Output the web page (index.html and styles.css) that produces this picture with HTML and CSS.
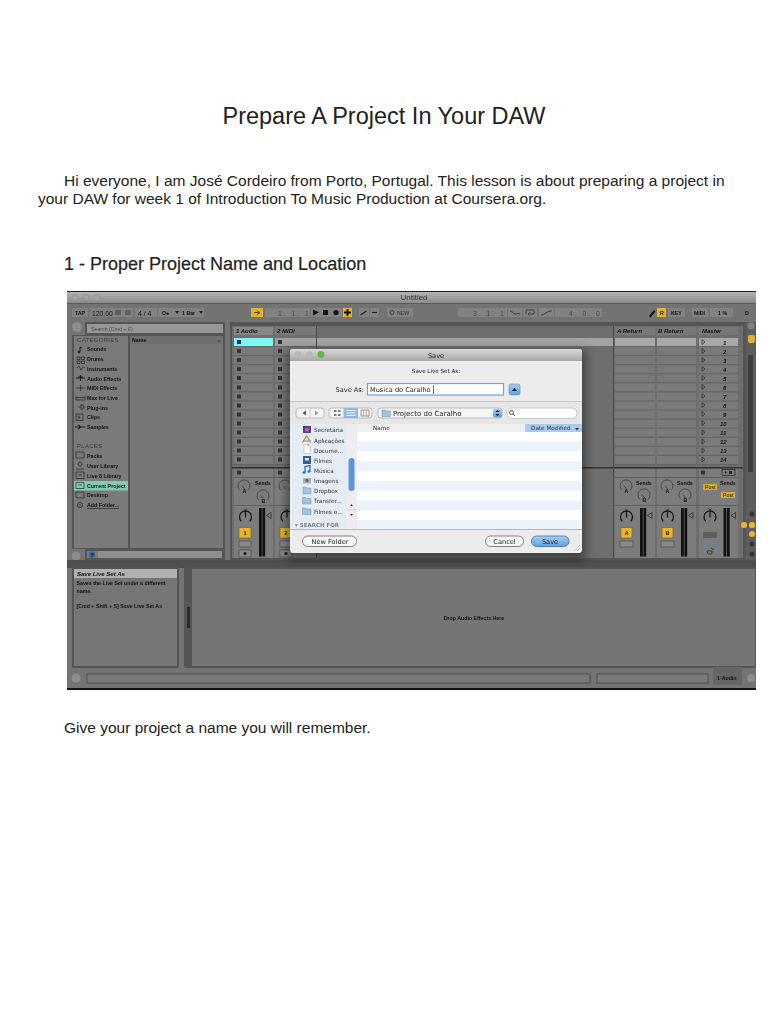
FILE: index.html
```html
<!DOCTYPE html>
<html>
    <head>
        <meta charset="UTF-8"/>
        <meta name="viewport" content="width=device-width, initial-scale=1">
        <link rel="stylesheet" href="styles.css">
    </head>
    <body>
        <div class="Page">
            <h1>Prepare A Project In Your DAW</h1>
            <p class="Intro">Hi everyone, I am José Cordeiro from Porto, Portugal. This lesson is about preparing a project in your DAW for week 1 of Introduction To Music Production at Coursera.org.</p>
            <h2>1 - Proper Project Name and Location</h2>
            <svg class="Shot" width="689" height="399" viewBox="67 291 689 399">
                <defs>
                    <pattern id="ClipRows" x="0" y="338" width="10" height="9.07" patternUnits="userSpaceOnUse">
                        <rect width="10" height="9.07" fill="#626262"/>
                        <rect width="10" height="8" fill="#7a7a7a"/>
                    </pattern>
                    <pattern id="FileRows" x="0" y="432" width="10" height="19.5" patternUnits="userSpaceOnUse">
                        <rect width="10" height="19.5" fill="#fff"/>
                        <rect y="9.75" width="10" height="9.75" fill="#edf3fc"/>
                    </pattern>
                    <linearGradient id="TitleGrad" x1="0" y1="0" x2="0" y2="1">
                        <stop offset="0" stop-color="#b4b4b4"/>
                        <stop offset="1" stop-color="#8b8b8b"/>
                    </linearGradient>
                    <linearGradient id="DlgTitle" x1="0" y1="0" x2="0" y2="1">
                        <stop offset="0" stop-color="#d8d8d8"/>
                        <stop offset="1" stop-color="#a8a8a8"/>
                    </linearGradient>
                    <linearGradient id="BlueBtn" x1="0" y1="0" x2="0" y2="1">
                        <stop offset="0" stop-color="#a9cdf2"/>
                        <stop offset="1" stop-color="#5f9fe0"/>
                    </linearGradient>
                    <g id="Knob">
                        <path d="M-4.2 4.2A6 6 0 1 1 4.2 4.2" class="KnobLine"/>
                        <path d="M0 0.5V-6" class="KnobLine"/>
                        <path d="M-1.5 -8.5L0 -7L1.5 -8.5" class="Thin"/>
                    </g>
                    <g id="Send">
                        <path d="M-4.2 4.2A6 6 0 1 1 4.2 4.2" class="SendLine"/>
                        <path d="M-2 -0.5L0.8 3.5" class="SendLine"/>
                    </g>
                    <g id="Fader">
                        <rect x="0" y="0" width="2.8" height="48.5" fill="#111"/>
                        <rect x="3.4" y="0" width="2.8" height="48.5" fill="#111"/>
                        <path d="M12 4.5L7.5 7.5L12 10.5Z" class="Thin"/>
                    </g>
                    <g id="Stop"><rect width="4" height="4" fill="#333"/></g>
                    <g id="Folder">
                        <path d="M0 1.5H3L4 2.5H8.5V8H0Z" fill="#9fc3e0" stroke="#6f93b2" stroke-width=".5"/>
                    </g>
                </defs>

                <!-- window frame -->
                <rect x="67" y="291" width="689" height="399" fill="#737373"/>
                <rect x="67" y="291" width="689" height="1" fill="#222"/>
                <rect x="67" y="292" width="689" height="11" fill="url(#TitleGrad)"/>
                <circle class="Light" cx="75" cy="297.5" r="3"/>
                <circle class="Light" cx="86" cy="297.5" r="3"/>
                <circle class="Light" cx="97" cy="297.5" r="3"/>
                <text class="WinTitle" x="414" y="300" text-anchor="middle">Untitled</text>
                <rect x="67" y="303" width="689" height="1" fill="#5a5a5a"/>

                <!-- control bar -->
                <rect class="Ctl" x="72" y="308" width="16" height="9"/>
                <rect class="Ctl" x="90" y="308" width="43" height="9"/>
                <rect class="Ctl" x="135" y="308" width="22" height="9"/>
                <rect class="Ctl" x="158" y="308" width="46" height="9"/>
                <rect x="251" y="308" width="12" height="9" fill="#e2b32f"/>
                <rect class="Ctl" x="265" y="308" width="45" height="9"/>
                <rect class="Ctl" x="311" y="308" width="31" height="9"/>
                <rect x="343" y="308" width="9" height="9" fill="#e2b32f"/>
                <rect class="Ctl" x="359" y="308" width="10" height="9"/>
                <rect class="Ctl" x="370" y="308" width="9" height="9"/>
                <rect class="Ctl" x="387" y="308" width="26" height="9"/>
                <rect class="Ctl" x="458" y="308" width="49" height="9"/>
                <rect class="Ctl" x="508" y="308" width="14" height="9"/>
                <rect class="Ctl" x="523" y="308" width="14" height="9"/>
                <rect class="Ctl" x="539" y="308" width="15" height="9"/>
                <rect class="Ctl" x="555" y="308" width="47" height="9"/>
                <rect x="657" y="308" width="9" height="9" fill="#e2b32f"/>
                <rect class="Ctl" x="668" y="308" width="17" height="9"/>
                <rect class="Ctl" x="692" y="308" width="16" height="9"/>
                <rect class="Ctl" x="710" y="308" width="23" height="9"/>
                <text class="Tiny Bold" x="75" y="315">TAP</text>
                <text class="Small" x="92" y="315.5">120.00</text>
                <path d="M116 310v5M118 310v5M120 310v5M126 310v5M128 310v5M130 310v5" class="Thin"/>
                <text class="Small" x="138" y="315.5">4 / 4</text>
                <text class="Tiny Bold" x="162" y="315">O●</text>
                <path d="M175 311h4l-2 3z" fill="#222"/>
                <text class="Tiny Bold" x="182" y="315">1 Bar</text>
                <path d="M199 311h4l-2 3z" fill="#222"/>
                <path d="M254 312.5h5m-2-2l3 2-3 2" class="Thin"/>
                <text class="Small Dim" x="278" y="315.5" letter-spacing="2">1. 1. 1</text>
                <path d="M313 309.5l6 3-6 3z" fill="#111"/>
                <rect x="323" y="310" width="5" height="5" fill="#111"/>
                <circle cx="336" cy="312.5" r="2.6" fill="#111"/>
                <path d="M347.5 309v7M344 312.5h7" stroke="#111" stroke-width="2"/>
                <path d="M360.5 315l6-4" class="Thick"/>
                <path d="M372 312.5h5" class="Thick"/>
                <circle cx="392" cy="312.5" r="2" class="Thin"/>
                <text class="Tiny Bold Dim" x="397" y="315">NEW</text>
                <text class="Small Dim" x="473" y="315.5" letter-spacing="2">3. 1. 1</text>
                <path d="M510 311c3 0 3 3 5 3s2-1 5 0" class="Thin"/>
                <path d="M526 310h8v4h-4m0-1.5l-2 1.5 2 1.5M526 310v4" class="Thin"/>
                <path d="M541 315c4 0 5-4 11-4" class="Thin"/>
                <text class="Small Dim" x="569" y="315.5" letter-spacing="2">4. 0. 0</text>
                <path d="M649 316l5-6 1.5 1.5-5 6z" fill="#111"/>
                <text class="Tiny Bold" x="660" y="315">R</text>
                <text class="Tiny Bold" x="671" y="315">KEY</text>
                <text class="Tiny Bold" x="694" y="315">MIDI</text>
                <text class="Tiny Bold" x="718" y="315">1 %</text>
                <text class="Tiny Bold" x="745" y="315">D</text>

                <!-- browser -->
                <circle cx="77" cy="327" r="5" fill="#8d8d8d"/>
                <rect x="85" y="322" width="140" height="13" fill="#555"/>
                <rect x="87" y="324" width="136" height="9" fill="#979797"/>
                <text class="Tiny Dim" x="91" y="331">Search (Cmd + F)</text>
                <rect x="72" y="335" width="153" height="214" fill="#555"/>
                <rect x="74" y="336" width="54" height="212" fill="#7a7a7a"/>
                <rect x="130" y="336" width="93" height="212" fill="#777"/>
                <rect x="130" y="336" width="93" height="8" fill="#6f6f6f"/>
                <text class="Tiny Bold" x="132" y="342">Name</text>
                <path d="M217 342l2-3 2 3z" fill="#555"/>
                <text class="Head" x="77" y="341.5">CATEGORIES</text>
                <text class="Head" x="77" y="448">PLACES</text>
                <rect x="74" y="481" width="54" height="9.5" fill="#80cdb4"/>
                <g class="Browser">
                    <text x="87" y="351">Sounds</text>
                    <text x="87" y="361">Drums</text>
                    <text x="87" y="370.5">Instruments</text>
                    <text x="87" y="380.5">Audio Effects</text>
                    <text x="87" y="390">MIDI Effects</text>
                    <text x="87" y="400">Max for Live</text>
                    <text x="87" y="409.5">Plug-ins</text>
                    <text x="87" y="419">Clips</text>
                    <text x="87" y="429">Samples</text>
                    <text x="87" y="458">Packs</text>
                    <text x="87" y="468">User Library</text>
                    <text x="87" y="477.5">Live 8 Library</text>
                    <text x="87" y="487.5">Current Project</text>
                    <text x="87" y="497">Desktop</text>
                    <text x="87" y="507" text-decoration="underline">Add Folder...</text>
                </g>
                <path d="M80 347v4.5M80 347l2 1" class="Thick"/>
                <circle cx="79" cy="352" r="1.3" fill="#222"/>
                <path d="M77 357h3v2.5h-3zM81.5 357h3v2.5h-3zM77 361h3v2.5h-3zM81.5 361h3v2.5h-3z" class="Thin"/>
                <path d="M77 368l2-2 2 4 2-3 2 1" class="Thin"/>
                <path d="M76 378h9M80.5 375v6M78.5 376.5l2 1.5 2-1.5" class="Thick"/>
                <path d="M76 388h9M80.5 385v6" class="Thin"/>
                <path d="M76 396v4h9v-4M76 397.5h9" class="Thin"/>
                <path d="M78 407h3M81 404.5a2.5 2.5 0 1 1 0 5zM84 405.5v3" class="Thin"/>
                <rect x="76" y="414" width="7" height="6.5" class="Thin"/>
                <path d="M78.5 415.5l2 1.7-2 1.7z" fill="#222"/>
                <path d="M75 427h10M78 425l3 2-3 2" class="Thick"/>
                <rect x="76" y="452" width="8" height="6" class="Thin"/>
                <circle cx="80" cy="464" r="2" class="Thin"/>
                <path d="M76 469h8" class="Thin"/>
                <path d="M76 472h8v6.5h-8z M78 475h4" class="Thin"/>
                <path d="M76 482.5h8v6h-8z M78 485h4" class="Thin"/>
                <path d="M76 492h8v6h-8z" class="Thin"/>
                <circle cx="80" cy="505" r="2.6" class="Thin"/>
                <path d="M79 505h2" class="Thin"/>
                <circle cx="76" cy="556" r="4.5" fill="#8d8d8d"/>
                <rect x="85" y="549" width="140" height="11" fill="#555"/>
                <rect x="87" y="551" width="135" height="7" fill="#7c7c7c"/>
                <rect x="98" y="551" width="124" height="7" fill="#8f8f8f"/>
                <circle cx="92" cy="554.5" r="3.2" fill="#2e69a8"/>
                <text class="Tiny Bold" x="90.5" y="556.5">?</text>

                <!-- session view -->
                <rect x="230" y="322" width="516" height="240" fill="#555"/>
                <rect x="232" y="326" width="511" height="232" fill="#6e6e6e"/>
                <rect x="234" y="327" width="39" height="8" fill="#878787"/>
                <rect x="275" y="327" width="41" height="8" fill="#787878"/>
                <rect x="615" y="327" width="40" height="8" fill="#787878"/>
                <rect x="657" y="327" width="39" height="8" fill="#787878"/>
                <rect x="699" y="327" width="39" height="8" fill="#787878"/>
                <text class="TrackName" x="236" y="333">1 Audio</text>
                <text class="TrackName" x="277" y="333">2 MIDI</text>
                <text class="TrackName" x="617" y="333">A Return</text>
                <text class="TrackName" x="658" y="333">B Return</text>
                <text class="TrackName" x="702" y="333">Master</text>

                <rect x="234" y="338" width="39" height="127" fill="url(#ClipRows)"/>
                <rect x="275" y="338" width="41" height="127" fill="url(#ClipRows)"/>
                <rect x="615" y="338" width="40" height="127" fill="url(#ClipRows)"/>
                <rect x="657" y="338" width="39" height="127" fill="url(#ClipRows)"/>
                <rect x="699" y="338" width="39" height="127" fill="url(#ClipRows)"/>
                <rect x="316" y="338" width="297" height="8" fill="#a2a2a2"/>
                <rect x="615" y="338" width="40" height="8" fill="#a8a8a8"/>
                <rect x="657" y="338" width="39" height="8" fill="#a8a8a8"/>
                <rect x="699" y="338" width="39" height="8" fill="#a8a8a8"/>
                <rect x="275" y="338" width="41" height="8" fill="#a0a0a0"/>
                <rect x="234" y="338" width="39" height="8" fill="#7ff6f6"/>
                <use href="#Stop" x="237" y="340"/>
                <use href="#Stop" x="237" y="349"/>
                <use href="#Stop" x="237" y="358"/>
                <use href="#Stop" x="237" y="367"/>
                <use href="#Stop" x="237" y="376"/>
                <use href="#Stop" x="237" y="385.5"/>
                <use href="#Stop" x="237" y="394.5"/>
                <use href="#Stop" x="237" y="403.5"/>
                <use href="#Stop" x="237" y="412.5"/>
                <use href="#Stop" x="237" y="421.5"/>
                <use href="#Stop" x="237" y="430.5"/>
                <use href="#Stop" x="237" y="439.5"/>
                <use href="#Stop" x="237" y="448.5"/>
                <use href="#Stop" x="237" y="457.5"/>
                <use href="#Stop" x="278" y="340"/>
                <use href="#Stop" x="278" y="349"/>
                <use href="#Stop" x="278" y="358"/>
                <use href="#Stop" x="278" y="367"/>
                <use href="#Stop" x="278" y="376"/>
                <use href="#Stop" x="278" y="385.5"/>
                <use href="#Stop" x="278" y="394.5"/>
                <use href="#Stop" x="278" y="403.5"/>
                <use href="#Stop" x="278" y="412.5"/>
                <use href="#Stop" x="278" y="421.5"/>
                <use href="#Stop" x="278" y="430.5"/>
                <use href="#Stop" x="278" y="439.5"/>
                <use href="#Stop" x="278" y="448.5"/>
                <use href="#Stop" x="278" y="457.5"/>
                <g class="Scenes">
                    <text x="723" y="344.5">1</text>
                    <text x="723" y="353.5">2</text>
                    <text x="723" y="362.5">3</text>
                    <text x="723" y="371.5">4</text>
                    <text x="723" y="380.5">5</text>
                    <text x="723" y="389.5">6</text>
                    <text x="723" y="398.5">7</text>
                    <text x="723" y="407.5">8</text>
                    <text x="723" y="416.5">9</text>
                    <text x="720" y="426">10</text>
                    <text x="720" y="435">11</text>
                    <text x="720" y="444">12</text>
                    <text x="720" y="453">13</text>
                    <text x="720" y="462">14</text>
                </g>
                <path d="M702 339.5l3 2.5-3 2.5zM702 348.5l3 2.5-3 2.5zM702 357.5l3 2.5-3 2.5zM702 366.5l3 2.5-3 2.5zM702 375.5l3 2.5-3 2.5zM702 384.5l3 2.5-3 2.5zM702 393.5l3 2.5-3 2.5zM702 402.5l3 2.5-3 2.5zM702 411.5l3 2.5-3 2.5zM702 420.5l3 2.5-3 2.5zM702 430l3 2.5-3 2.5zM702 439l3 2.5-3 2.5zM702 448l3 2.5-3 2.5zM702 457l3 2.5-3 2.5z" class="Thin"/>

                <rect x="232" y="467" width="511" height="1.5" fill="#333"/>
                <rect x="234" y="469" width="39" height="89" fill="#7c7c7c"/>
                <rect x="275" y="469" width="41" height="89" fill="#7c7c7c"/>
                <rect x="615" y="469" width="40" height="89" fill="#7c7c7c"/>
                <rect x="657" y="469" width="39" height="89" fill="#7c7c7c"/>
                <rect x="699" y="469" width="39" height="89" fill="#7c7c7c"/>
                <path d="M234 477.5h82M615 477.5h123M234 505.5h82M615 505.5h123" stroke="#5f5f5f" stroke-width="1"/>
                <path d="M316.5 326v232M613.5 326v232" stroke="#4a4a4a" stroke-width="1"/>
                <use href="#Stop" x="237" y="470.5"/>
                <use href="#Stop" x="278" y="470.5"/>
                <use href="#Stop" x="701" y="470.5"/>
                <rect x="722" y="469.5" width="13" height="6" class="Thin"/>
                <path d="M725 471l2 1.5-2 1.5zM729 471h3v3h-3z" fill="#222"/>

                <!-- track strips -->
                <use href="#Send" x="244" y="486"/>
                <use href="#Send" x="263" y="496"/>
                <use href="#Send" x="285" y="486"/>
                <text class="Tiny Bold" x="255" y="485">Sends</text>
                <text class="Tiny Bold" x="242.5" y="492.5">A</text>
                <text class="Tiny Bold" x="261.5" y="502.5">B</text>
                <use href="#Knob" x="245.5" y="517"/>
                <use href="#Knob" x="287" y="517"/>
                <use href="#Fader" x="259" y="508"/>
                <rect class="Arm" x="239" y="527.5" width="12" height="10.5"/>
                <text class="Tiny Bold" x="243.5" y="535">1</text>
                <rect class="Arm" x="280" y="527.5" width="12" height="10.5"/>
                <text class="Tiny Bold" x="284.5" y="535">2</text>
                <rect class="Box" x="239" y="541" width="12" height="6"/>
                <rect class="Box" x="239" y="550" width="12" height="7"/>
                <circle cx="245" cy="553.5" r="1.5" fill="#111"/>
                <rect class="Box" x="280" y="541" width="12" height="6"/>
                <rect class="Box" x="280" y="550" width="12" height="7"/>
                <circle cx="286" cy="553.5" r="1.5" fill="#111"/>

                <use href="#Send" x="626" y="486"/>
                <use href="#Send" x="644" y="495"/>
                <text class="Tiny Bold" x="636" y="485">Sends</text>
                <text class="Tiny Bold" x="624.5" y="492.5">A</text>
                <text class="Tiny Bold" x="642.5" y="501.5">B</text>
                <use href="#Knob" x="626.5" y="517"/>
                <use href="#Fader" x="640" y="508"/>
                <rect class="Arm" x="621" y="527.5" width="11" height="10.5"/>
                <text class="Tiny Bold" x="624.8" y="535">A</text>
                <rect class="Box" x="620" y="541" width="13" height="6"/>
                <use href="#Send" x="667" y="486"/>
                <use href="#Send" x="685" y="495"/>
                <text class="Tiny Bold" x="677" y="485">Sends</text>
                <text class="Tiny Bold" x="665.5" y="492.5">A</text>
                <text class="Tiny Bold" x="683.5" y="501.5">B</text>
                <use href="#Knob" x="667.5" y="517"/>
                <use href="#Fader" x="681" y="508"/>
                <rect class="Arm" x="662" y="527.5" width="11" height="10.5"/>
                <text class="Tiny Bold" x="665.8" y="535">B</text>
                <rect class="Box" x="661" y="541" width="13" height="6"/>
                <rect x="703" y="484" width="14" height="6" fill="#d9ad33"/>
                <rect x="721" y="492" width="14" height="6" fill="#d9ad33"/>
                <text class="Tiny" x="705" y="489">Post</text>
                <text class="Tiny" x="723" y="497">Post</text>
                <text class="Tiny Bold" x="720" y="485">Sends</text>
                <use href="#Knob" x="710" y="517"/>
                <use href="#Fader" x="723.5" y="508"/>
                <rect x="703" y="532" width="14" height="6" fill="#5f5f5f"/>
                <path d="M705 553a6.5 6.5 0 1 1 11-1" fill="none" stroke="#5d88b4" stroke-width="1.2"/>
                <path d="M707 551h5v3h-4zM711 548l3 2" class="Thin"/>

                <!-- right side buttons -->
                <rect x="746" y="322" width="10" height="240" fill="#5d5d5d"/>
                <circle cx="751" cy="326" r="3.5" fill="#808080"/>
                <rect x="748" y="335" width="7" height="8" rx="2" fill="#e0b13a"/>
                <rect x="748" y="355" width="5" height="117" fill="#3e3e3e"/>
                <circle cx="752" cy="514" r="2.5" fill="#333"/>
                <rect x="741" y="522" width="6" height="6" rx="2.5" fill="#e9b52d"/>
                <rect x="749" y="522" width="6" height="6" rx="2.5" fill="#e9b52d"/>
                <circle cx="752" cy="534" r="3" fill="#e9b52d"/>
                <circle cx="752" cy="544" r="2.5" fill="#333"/>
                <circle cx="752" cy="554" r="2.5" fill="#333"/>

                <!-- info and device panels -->
                <rect x="67" y="560" width="689" height="8" fill="#4f4f4f"/>
                <rect x="72" y="567" width="107" height="101" rx="2" fill="#555"/>
                <rect x="74" y="569" width="103" height="97" fill="#767676"/>
                <rect x="74" y="569" width="103" height="9" fill="#b0b0b0"/>
                <text class="TrackName" x="77" y="575.5">Save Live Set As</text>
                <text class="Tiny Bold" x="76.5" y="584.5">Saves the Live Set under a different</text>
                <text class="Tiny Bold" x="76.5" y="592.5">name.</text>
                <text class="Tiny Bold" x="76.5" y="607.5">[Cmd + Shift + S] Save Live Set As</text>
                <rect x="184" y="567" width="572" height="101" rx="2" fill="#555"/>
                <rect x="192" y="569" width="563" height="97" fill="#757575"/>
                <rect x="187" y="607" width="3" height="21" fill="#2c2c2c"/>
                <text class="Tiny Bold" x="474" y="620" text-anchor="middle">Drop Audio Effects Here</text>

                <!-- status bar -->
                <circle cx="76" cy="678" r="4.5" fill="#8d8d8d"/>
                <rect class="Status" x="87" y="674" width="503" height="9"/>
                <rect class="Status" x="597" y="674" width="111" height="9"/>
                <rect x="713" y="667" width="29" height="18" fill="#666"/>
                <text class="Tiny Bold" x="717" y="680">1-Audio</text>
                <circle cx="751" cy="678" r="4" fill="#8d8d8d"/>
                <rect x="67" y="688" width="689" height="2" fill="#111"/>

                <!-- save dialog -->
                <rect class="DlgShadow" x="286" y="350" width="300" height="210" rx="4"/>
                <rect x="290" y="349" width="292" height="204" rx="3" fill="#ececec"/>
                <path d="M290 361v-9a3 3 0 0 1 3-3h286a3 3 0 0 1 3 3v9z" fill="url(#DlgTitle)"/>
                <circle cx="298" cy="354.5" r="3.2" fill="#b8b8b8"/>
                <circle cx="309" cy="354.5" r="3.2" fill="#b8b8b8"/>
                <circle cx="321" cy="354.5" r="3.4" fill="#67b34a"/>
                <text class="Dlg" x="436" y="357.5" text-anchor="middle">Save</text>
                <text class="Dlg Mini" x="436" y="373" text-anchor="middle">Save Live Set As:</text>
                <text class="Dlg" x="364" y="391.5" text-anchor="end">Save As:</text>
                <rect x="367.5" y="383.5" width="136" height="11.5" fill="#fff" stroke="#6ea3dc" stroke-width="1.2"/>
                <text class="Dlg" x="370" y="391.5">Musica do Caralho</text>
                <path d="M433.5 385v9" stroke="#111" stroke-width=".6"/>
                <rect x="509" y="384" width="11" height="11" rx="2" fill="url(#BlueBtn)" stroke="#6b8fb5" stroke-width=".6"/>
                <path d="M512 391l2.5-3 2.5 3z" fill="#111"/>
                <path d="M290 401.5h292" stroke="#c6c6c6"/>
                <rect x="290" y="402" width="292" height="22" fill="#e6e6e6"/>

                <rect class="Pill" x="296" y="408" width="28" height="10" rx="3"/>
                <path d="M310 408v10" stroke="#bbb" stroke-width=".6"/>
                <path d="M306 410.5l-3.5 2.5 3.5 2.5z" fill="#555"/>
                <path d="M315 410.5l3.5 2.5-3.5 2.5z" fill="#999"/>
                <rect class="Pill" x="329" y="408" width="43" height="10" rx="3"/>
                <rect x="343.5" y="408" width="14.5" height="10" fill="#8db9ea"/>
                <path d="M334 410h2.5v2H334zM338 410h2.5v2H338zM334 414h2.5v2H334zM338 414h2.5v2H338z" fill="#777"/>
                <path d="M346.5 410.5h9M346.5 413h9M346.5 415.5h9" stroke="#fff" stroke-width=".9"/>
                <rect x="361" y="410" width="8" height="6" fill="none" stroke="#777" stroke-width=".7"/>
                <path d="M363.7 410v6M366.3 410v6" stroke="#777" stroke-width=".5"/>
                <rect class="Pill" x="378" y="408" width="124" height="10" rx="3"/>
                <rect x="493" y="408.5" width="9" height="9" rx="2" fill="url(#BlueBtn)"/>
                <path d="M495.5 412l2-2 2 2zM495.5 414l2 2 2-2z" fill="#111"/>
                <use href="#Folder" x="382" y="408.5"/>
                <text class="Dlg Path" x="393" y="415.5">Projecto do Caralho</text>
                <rect x="507" y="408" width="70" height="10.5" rx="5.2" fill="#fff" stroke="#b5b5b5" stroke-width=".7"/>
                <circle cx="511.5" cy="412.5" r="2" fill="none" stroke="#444" stroke-width=".9"/>
                <path d="M513 414l2 2" stroke="#444" stroke-width="1"/>

                <!-- save dialog: sidebar and list -->
                <rect x="290" y="424" width="57" height="105" fill="#e6ecf4"/>
                <rect x="347" y="424" width="9" height="105" fill="#eee"/>
                <rect x="348.5" y="458" width="6" height="33" rx="3" fill="#5d94d6"/>
                <path d="M350 506l1.5-2 1.5 2zM350 514l1.5 2 1.5-2z" fill="#333"/>
                <path d="M347 510h9" stroke="#bbb" stroke-width=".5"/>
                <rect x="303" y="426" width="8" height="7" fill="#5a3d8f"/>
                <path d="M307 427l.8 1.8 1.8.3-1.3 1.2.4 1.7-1.7-.9-1.7.9.4-1.7-1.3-1.2 1.8-.3z" fill="#d66bb0"/>
                <path d="M302.5 442.5l4-6.500 4.500 6.500" fill="none" stroke="#c8892f" stroke-width="1.3"/>
                <path d="M304 441h6" stroke="#7d8a9a" stroke-width="1"/>
                <path d="M304 444.5h4.5l2 2v7h-6.500z" fill="#fdfdfd" stroke="#aaa" stroke-width=".5"/>
                <path d="M307.5 443.5h1.5v2.5h-1.500z" fill="#d8b45a"/>
                <rect x="303" y="456" width="8" height="8" fill="#335e92"/>
                <rect x="305" y="458" width="4" height="2.5" fill="#dfe8f4"/>
                <path d="M305 472.5v-6l5-1v6" fill="none" stroke="#2f6fd0" stroke-width="1.3"/>
                <ellipse cx="304" cy="472.5" rx="1.5" ry="1.2" fill="#2f6fd0"/>
                <ellipse cx="309" cy="471.5" rx="1.5" ry="1.2" fill="#2f6fd0"/>
                <path d="M303 478h8v5.5h-8z" fill="#aab0b8"/>
                <circle cx="307" cy="480.5" r="1.7" fill="#666c74"/>
                <path d="M303 487h3.5l1 1H311v6h-8z" fill="#a6c2de" stroke="#7d98b5" stroke-width=".5"/>
                <use href="#Folder" x="302.5" y="496"/>
                <use href="#Folder" x="302.5" y="506.5"/>
                <g class="Side">
                    <text x="314" y="432">Secretária</text>
                    <text x="314" y="442.5">Aplicações</text>
                    <text x="314" y="452.5">Docume...</text>
                    <text x="314" y="462.5">Filmes</text>
                    <text x="314" y="473">Música</text>
                    <text x="314" y="483">Imagens</text>
                    <text x="314" y="493">Dropbox</text>
                    <text x="314" y="503">Transfer...</text>
                    <text x="314" y="514">Filmes e...</text>
                </g>
                <text class="SearchFor" x="295" y="527">▾ SEARCH FOR</text>
                <rect x="357" y="424" width="225" height="8" fill="#efefef"/>
                <rect x="525" y="424" width="57" height="8" fill="#a8cbf0"/>
                <text class="Side" x="373" y="430">Name</text>
                <text class="Side" x="531" y="430">Date Modified</text>
                <path d="M575 428h4l-2 2.5z" fill="#334"/>
                <rect x="357" y="432" width="225" height="97" fill="url(#FileRows)"/>
                <path d="M290 529.5h292" stroke="#a9a9a9" stroke-width=".8"/>

                <rect class="MacBtn" x="302.5" y="536" width="54" height="10.5" rx="5.2"/>
                <text class="Dlg" x="330" y="544" text-anchor="middle">New Folder</text>
                <rect class="MacBtn" x="485.5" y="536" width="38" height="10.5" rx="5.2"/>
                <text class="Dlg" x="504.5" y="544" text-anchor="middle">Cancel</text>
                <rect x="531.5" y="536" width="37.5" height="10.5" rx="5.2" fill="url(#BlueBtn)" stroke="#3f6ea3" stroke-width=".8"/>
                <text class="Dlg" x="550" y="544" text-anchor="middle">Save</text>
                <path d="M574 551l6-6M577 551l3-3" stroke="#aaa" stroke-width=".5"/>
            </svg>
            <p class="Caption">Give your project a name you will remember.</p>
        </div>
    </body>
</html>
```

FILE: styles.css
```css
body
{
    margin:0;
    background:#fff;
    color:#222;
    font-family:"Liberation Sans", Arial, sans-serif;
}
.Page
{
    padding:0 18px 0 38px;
}
h1
{
    margin:0 -18px 0 -38px;
    padding-top:102px;
    font-size:23.5px;
    line-height:28px;
    font-weight:normal;
    text-align:center;
}
.Intro
{
    margin:0;
    padding-top:42px;
    font-size:15.5px;
    line-height:17.5px;
    text-indent:26px;
}
h2
{
    margin:0;
    padding:46px 0 0 26px;
    font-size:18px;
    line-height:22px;
    font-weight:normal;
    -webkit-text-stroke:.2px #222;
}
.Shot
{
    display:block;
    margin:16px 0 0 29px;
    filter:blur(.55px);
}
.Caption
{
    margin:0;
    padding:28px 0 0 26px;
    font-size:15.5px;
    line-height:20px;
}

/* screenshot parts */
.Shot text
{
    font-family:"Liberation Sans", Arial, sans-serif;
    fill:#111;
}
.Shot .Tiny
{
    font-size:5.25px;
}
.Shot .Small
{
    font-size:6.8px;
}
.Shot .Bold
{
    font-weight:bold;
}
.Shot .Dim
{
    fill:#4a4a4a;
}
.Shot .Head
{
    font-size:6px;
    letter-spacing:.3px;
    fill:#3c3c3c;
}
.Shot .Browser text
{
    font-size:5.3px;
    font-weight:bold;
}
.Shot .WinTitle
{
    font-size:8px;
    fill:#333;
}
.Shot .TrackName
{
    font-size:6px;
    font-weight:bold;
    font-style:italic;
}
.Shot .Scenes text
{
    font-size:6px;
    font-weight:bold;
    font-style:italic;
}
.Shot .Dlg
{
    font-family:"DejaVu Sans", sans-serif;
    font-size:6.6px;
    fill:#222;
}
.Shot .Dlg.Mini
{
    font-size:5.6px;
}
.Shot .Dlg.Path
{
    font-size:7px;
}
.Shot .Side text, .Shot text.Side
{
    font-family:"DejaVu Sans", sans-serif;
    font-size:5.7px;
    fill:#333;
}
.Shot text.SearchFor
{
    font-family:"DejaVu Sans", sans-serif;
    font-size:5.5px;
    font-weight:bold;
    fill:#7d8794;
}
.Light
{
    fill:#a4a4a4;
    stroke:#8a8a8a;
    stroke-width:.6;
}
.Ctl
{
    fill:#828282;
}
.Thin
{
    fill:none;
    stroke:#222;
    stroke-width:.7;
}
.Thick
{
    fill:none;
    stroke:#222;
    stroke-width:1.1;
}
.KnobLine
{
    fill:none;
    stroke:#111;
    stroke-width:1.2;
}
.SendLine
{
    fill:none;
    stroke:#333;
    stroke-width:.7;
}
.Arm
{
    fill:#e9b52d;
    stroke:#6b5a25;
    stroke-width:.6;
}
.Box
{
    fill:#8a8a8a;
    stroke:#444;
    stroke-width:.6;
}
.Status
{
    fill:#7a7a7a;
    stroke:#505050;
    stroke-width:1;
}
.DlgShadow
{
    fill:#000;
    opacity:.4;
    filter:blur(5px);
}
.Pill
{
    fill:#f5f5f5;
    stroke:#aaa;
    stroke-width:.7;
}
.MacBtn
{
    fill:#f7f7f7;
    stroke:#666;
    stroke-width:.8;
}
```
